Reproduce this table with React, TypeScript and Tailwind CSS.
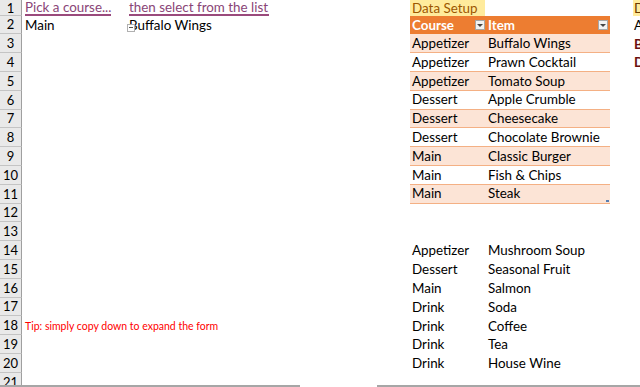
import React from "react";

const font = { fontFamily: "Lato, 'Open Sans', 'Liberation Sans', sans-serif" };

const tableRows = [
  ["Appetizer", "Buffalo Wings"],
  ["Appetizer", "Prawn Cocktail"],
  ["Appetizer", "Tomato Soup"],
  ["Dessert", "Apple Crumble"],
  ["Dessert", "Cheesecake"],
  ["Dessert", "Chocolate Brownie"],
  ["Main", "Classic Burger"],
  ["Main", "Fish & Chips"],
  ["Main", "Steak"],
];

const extraRows = [
  ["Appetizer", "Mushroom Soup"],
  ["Dessert", "Seasonal Fruit"],
  ["Main", "Salmon"],
  ["Drink", "Soda"],
  ["Drink", "Coffee"],
  ["Drink", "Tea"],
  ["Drink", "House Wine"],
];

function FilterButton() {
  return (
    <div className="w-[10px] h-[10px] bg-[#f2f2f2] border border-[#a6a6a6] flex items-center justify-center">
      <div className="w-0 h-0 border-l-[3px] border-r-[3px] border-t-[3px] border-l-transparent border-r-transparent border-t-[#444]"></div>
    </div>
  );
}

function Row({ n, first, children }: { n: number; first?: boolean; children?: React.ReactNode }) {
  return (
    <div
      className={`grid grid-cols-[22px_90px_15px_143px_140px_75px_125px_23px_1fr] ${first ? "h-[15.6px]" : "h-[18.8px]"} text-[13.4px] leading-none text-black`}
    >
      <div className="bg-[#e9e9e9] border-r border-b border-r-[#9f9f9f] border-b-[#c4c4c4] flex items-center justify-center pt-[1px] text-[13px]">
        {n}
      </div>
      {children}
    </div>
  );
}

function Cell({ className = "", children }: { className?: string; children?: React.ReactNode }) {
  return <div className={`flex items-center whitespace-nowrap pt-[1px] ${className}`}>{children}</div>;
}

export default function App() {
  return (
    <div className="w-[640px] h-[387px] bg-white overflow-hidden" style={font}>
      <div className="h-[385px] overflow-hidden">
        {/* Row 1 */}
        <Row n={1} first>
          <Cell className="ml-[3px] mr-[1px] border-b-2 border-[#9a4a7c] text-[#8a4577]">Pick a course...</Cell>
          <Cell />
          <Cell className="ml-[2px] mr-[1px] border-b-2 border-[#9a4a7c] text-[#8a4577]">then select from the list</Cell>
          <Cell />
          <Cell className="bg-[#ffeb9c] text-[#9c5700] pl-[2px]">Data Setup</Cell>
          <Cell />
          <Cell />
          <Cell className="bg-[#ffeb9c] text-[#6b3a00] pl-[1px] overflow-hidden">Data</Cell>
        </Row>

        {/* Row 2 */}
        <Row n={2}>
          <Cell className="pl-[3px]">Main</Cell>
          <Cell />
          <Cell className="relative pl-[2px]">
            Buffalo Wings
            <div className="absolute left-0 top-[8px] w-[8px] h-[8px] bg-white border border-[#b0b0b0] flex items-start justify-center">
              <div className="w-[4px] h-[1px] bg-[#555] mt-[2px]"></div>
            </div>
          </Cell>
          <Cell />
          <Cell className="bg-[#ed7d31] text-white font-bold pl-[2px] justify-between">
            Course
            <FilterButton />
          </Cell>
          <Cell className="bg-[#ed7d31] text-white font-bold pl-[3px] pr-[2px] justify-between">
            Item
            <FilterButton />
          </Cell>
          <Cell />
          <Cell className="pl-[1px] overflow-hidden">Appetizer</Cell>
        </Row>

        {/* Table rows 3-11 */}
        {tableRows.map(([course, item], i) => {
          const band = i % 2 === 0 ? "bg-[#fce4d6]" : "bg-white";
          return (
            <Row key={item} n={i + 3}>
              <Cell />
              <Cell />
              <Cell />
              <Cell />
              <Cell className={`${band} border-b border-[#f4b084] pl-[2px]`}>{course}</Cell>
              <Cell className={`${band} border-b border-[#f4b084] pl-[3px] relative`}>
                {item}
                {i === tableRows.length - 1 && (
                  <div className="absolute right-[1px] bottom-[1px] w-[3px] h-[2px] bg-[#5a7fb0]"></div>
                )}
              </Cell>
              <Cell />
              <Cell className="pl-[1px] overflow-hidden text-[#6b0f0f] font-bold">
                {i === 0 ? "B" : i === 1 ? "D" : ""}
              </Cell>
            </Row>
          );
        })}

        <Row n={12} />
        <Row n={13} />

        {/* Rows 14-20, the tip sits in row 18 */}
        {extraRows.map(([course, item], i) => (
          <Row key={item} n={i + 14}>
            <Cell className="pl-[3px] overflow-visible text-[10.5px] text-[#ff0000]">
              {i === 4 ? "Tip: simply copy down to expand the form" : ""}
            </Cell>
            <Cell />
            <Cell />
            <Cell />
            <Cell className="pl-[2px]">{course}</Cell>
            <Cell className="pl-[3px]">{item}</Cell>
          </Row>
        ))}

        <Row n={21} />
      </div>
      <div className="flex h-[2px]">
        <div className="w-[300px] bg-[#a6a6a6]"></div>
        <div className="w-[77px] bg-white"></div>
        <div className="flex-1 bg-[#a6a6a6]"></div>
      </div>
    </div>
  );
}
